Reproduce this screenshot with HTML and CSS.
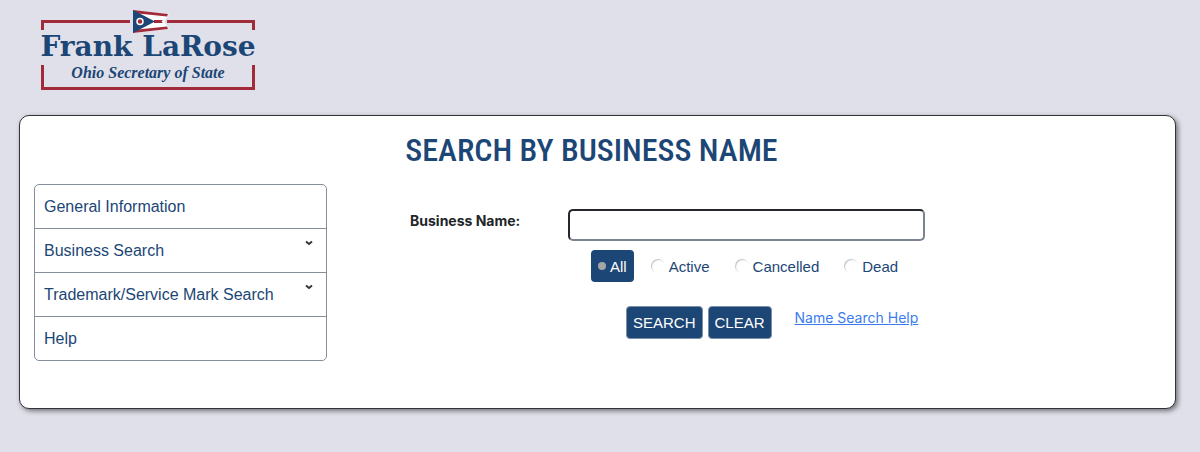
FILE: index.html
```html
<!DOCTYPE html>
<html lang="en">
<head>
  <meta charset="UTF-8" />
  <meta name="viewport" content="width=device-width, initial-scale=1.0" />
  <title>Business Search</title>
  <link rel="stylesheet" href="styles.css">
</head>
<body>
  <header class="site-header">
    <svg class="logo" viewBox="0 0 216 82" role="img" aria-label="Frank LaRose, Ohio Secretary of State">
      <g class="logo-frame">
        <path d="M2.500 21V12.500H90M127 12.500H213.500V21"/>
        <path d="M2.500 56V79.500H213.500V56"/>
      </g>
      <!-- flag -->
      <path fill="#fff" d="M93 1l36 4-5 7.500 5 7.500-36 4z"/>
      <path fill="#a12b39" d="M93 1l35 4-1 2.500L93 4zM93 24l35-4-1-2.500-34 3.500zM114 11h9l-1.500 1.500 1.500 1.500h-9z"/>
      <path fill="#1c4675" d="M93 1l22 11.500L93 24z"/>
      <circle cx="100" cy="12.500" r="3" fill="#a12b39" stroke="#fff" stroke-width="1.500"/>
      <text class="logo-name" x="108" y="47">Frank LaRose</text>
      <text class="logo-role" x="108" y="69">Ohio Secretary of State</text>
    </svg>
  </header>

  <main class="panel">
    <h1 class="page-title">SEARCH BY BUSINESS NAME</h1>
    <div class="columns">
      <nav class="side-menu">
        <a class="menu-item" href="#">General Information</a>
        <a class="menu-item" href="#">Business Search
          <svg class="caret" viewBox="0 0 8 6"><path d="M1 1.500l3 2.500 3-2.500"/></svg>
        </a>
        <a class="menu-item" href="#">Trademark/Service Mark Search
          <svg class="caret" viewBox="0 0 8 6"><path d="M1 1.500l3 2.500 3-2.500"/></svg>
        </a>
        <a class="menu-item" href="#">Help</a>
      </nav>

      <form class="search-form">
        <div class="field">
          <label class="field-label" for="bname">Business Name:</label>
          <input class="field-input" type="text" id="bname" name="bname">
        </div>
        <div class="status">
          <label class="option option-checked"><input type="radio" name="status" value="all" checked>All</label>
          <label class="option"><input type="radio" name="status" value="active">Active</label>
          <label class="option"><input type="radio" name="status" value="cancelled">Cancelled</label>
          <label class="option"><input type="radio" name="status" value="dead">Dead</label>
        </div>
        <div class="actions">
          <button class="btn" type="submit">SEARCH</button>
          <button class="btn" type="reset">CLEAR</button>
          <a class="help-link" href="#">Name Search Help</a>
        </div>
      </form>
    </div>
  </main>
</body>
</html>
```
FILE: styles.css
```css
* {
  box-sizing: border-box;
}

body {
  margin: 0;
  background: #e0e0ea;
  color: #212529;
  font-family: "Liberation Sans", Arial, sans-serif;
  font-size: 16px;
}

.site-header {
  padding: 9px 40px 24px;
}

.logo {
  display: block;
  width: 216px;
  height: 82px;
}

.logo-frame path {
  fill: none;
  stroke: #a12b39;
  stroke-width: 3;
}

.logo-name,
.logo-role {
  fill: #1c4675;
  text-anchor: middle;
}

.logo-name {
  font: bold 28px "DejaVu Serif", serif;
}

.logo-role {
  font: italic bold 16px "Liberation Serif", serif;
}

.panel {
  margin: 0 24px 44px 19px;
  padding: 16px 14px 47px;
  background: #fff;
  border: 1px solid #33333b;
  border-radius: 10px;
  box-shadow: 2px 2px 5px rgba(0, 0, 0, 0.5);
}

.page-title {
  margin: 0 12px 16px 0;
  color: #1c4675;
  font-family: "Roboto Condensed", "Liberation Sans Narrow", "Roboto", sans-serif;
  font-size: 32px;
  font-weight: 500;
  line-height: 36px;
  text-align: center;
}

.columns {
  display: flex;
  align-items: flex-start;
  gap: 83px;
}

.side-menu {
  flex: 0 0 26%;
  border: 1px solid #868e9c;
  border-radius: 5px;
}

.menu-item {
  display: flex;
  justify-content: space-between;
  padding: 0 13px 0 9px;
  color: #1c4675;
  line-height: 43px;
  text-decoration: none;
}

.menu-item + .menu-item {
  border-top: 1px solid #868e9c;
}

.caret {
  width: 8px;
  height: 6px;
  margin-top: 11px;
  fill: none;
  stroke: #33383d;
  stroke-width: 2;
}

.search-form {
  flex: 0 1 515px;
  padding-top: 25px;
  font-size: 15px;
}

.field {
  display: flex;
}

.field-label {
  flex: 0 0 158px;
  font-family: "Inter", sans-serif;
  font-size: 14px;
  font-weight: 700;
  line-height: 24px;
}

.field-input {
  flex: 1;
  min-width: 0;
  height: 32px;
  padding: 2px 8px;
  font: inherit;
  background: #fff;
  border: 2px solid;
  border-color: #26262e #7b8490 #7b8490 #26262e;
  border-radius: 5px;
}

.status {
  display: flex;
  gap: 9px;
  margin: 9px 0 24px 181px;
}

.option {
  display: flex;
  align-items: center;
  gap: 4px;
  height: 32px;
  padding: 0 8px;
  color: #1c4675;
}

.option input {
  width: 14px;
  height: 14px;
  margin: 0;
  appearance: none;
  border-radius: 50%;
  box-shadow: inset 1px 1px 1px #c4c4cc;
}

.option-checked {
  padding: 0 7px;
  background: #1c4675;
  border-radius: 4px;
  color: #fff;
}

.option-checked input {
  width: 8px;
  height: 8px;
  background: #a5a5a8;
  box-shadow: none;
}

.actions {
  display: flex;
  gap: 5px;
  margin-left: 216px;
}

.btn {
  height: 33px;
  padding: 0 6px;
  background: #1c4675;
  border: 1px solid #7b8fa8;
  border-radius: 4px;
  color: #fff;
  font: inherit;
}

.help-link {
  margin-left: 18px;
  color: #3a7cf0;
  font-family: "Inter", sans-serif;
  font-size: 14px;
  line-height: 24px;
  white-space: nowrap;
}
```
